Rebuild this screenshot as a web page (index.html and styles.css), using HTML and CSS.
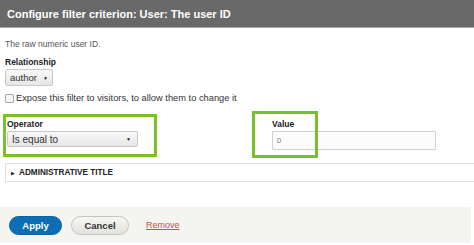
FILE: index.html
```html
<!DOCTYPE html>
<html>
<head>
<meta charset="utf-8">
<link rel="stylesheet" href="styles.css">
</head>
<body>
<div class="dialog">
  <header class="title-bar">
    <h1 class="title">Configure filter criterion: User: The user ID</h1>
  </header>
  <div class="content">
    <p class="description">The raw numeric user ID.</p>
    <div class="form-item relationship">
      <label class="label">Relationship</label>
      <div class="select small-select"><span>author</span><span class="arrow">&#9660;</span></div>
    </div>
    <div class="checkbox-row">
      <span class="checkbox"></span>
      <span class="checkbox-label">Expose this filter to visitors, to allow them to change it</span>
    </div>
    <div class="filter-row">
      <div class="form-item operator">
        <label class="label">Operator</label>
        <div class="select wide-select"><span>Is equal to</span><span class="arrow">&#9660;</span></div>
        <span class="highlight hl-operator"></span>
      </div>
      <div class="form-item value">
        <label class="label">Value</label>
        <div class="text-input">0</div>
        <span class="highlight hl-value"></span>
      </div>
    </div>
    <div class="details">
      <span class="triangle">&#9654;</span><span class="summary">ADMINISTRATIVE TITLE</span>
    </div>
  </div>
  <footer class="actions">
    <button class="btn btn-primary">Apply</button>
    <button class="btn btn-secondary">Cancel</button>
    <a class="link-remove" href="#">Remove</a>
  </footer>
</div>
</body>
</html>
```
FILE: styles.css
```css
html, body {
  margin: 0;
  padding: 0;
  background: #ffffff;
}
body {
  font-family: "Liberation Sans", Arial, sans-serif;
  color: #333;
  width: 474px;
  height: 245px;
  overflow: hidden;
}
.dialog {
  display: flex;
  flex-direction: column;
}
.title-bar {
  height: 27px;
  background: #696969;
  border-bottom: 1px solid #a9a9a9;
  display: flex;
  align-items: center;
  padding-left: 7px;
}
.title {
  margin: 0;
  font-size: 11px;
  font-weight: bold;
  color: #ffffff;
  letter-spacing: 0;
}
.content {
  padding-left: 5px;
  display: flex;
  flex-direction: column;
}
.description {
  margin: 12px 0 0 0;
  font-size: 8.5px;
  color: #555;
  line-height: 9px;
}
.form-item {
  display: flex;
  flex-direction: column;
  position: relative;
}
.label {
  font-size: 8.5px;
  font-weight: bold;
  color: #222;
  line-height: 10px;
}
.relationship {
  margin-top: 8px;
}
.select {
  display: flex;
  align-items: center;
  justify-content: space-between;
  box-sizing: border-box;
  border: 1px solid #c8c8c8;
  border-radius: 2px;
  background: linear-gradient(#f8f8f8, #e6e6e6);
  font-size: 9.5px;
  color: #333;
  padding: 0 4px 0 4px;
}
.small-select {
  margin-top: 2px;
  width: 48px;
  height: 17px;
}
.arrow {
  font-size: 5px;
  color: #222;
}
.checkbox-row {
  display: flex;
  align-items: center;
  margin-top: 7px;
  gap: 2px;
}
.checkbox {
  width: 7px;
  height: 7px;
  border: 1px solid #aaa;
  border-radius: 1px;
  background: #f4f4f4;
}
.checkbox-label {
  font-size: 9.3px;
  color: #333;
  line-height: 10px;
}
.filter-row {
  display: flex;
  margin-top: 16px;
}
.operator {
  margin-left: 2px;
  width: 131px;
}
.wide-select {
  margin-top: 2px;
  width: 131px;
  height: 16px;
  padding-right: 6px;
  font-size: 10px;
}
.value {
  margin-left: 134px;
}
.text-input {
  box-sizing: border-box;
  margin-top: 2px;
  width: 164px;
  height: 19px;
  border: 1px solid #d0d0d0;
  border-radius: 1px;
  background: #fcfcfc;
  font-size: 7.5px;
  color: #777;
  padding-left: 4px;
  display: flex;
  align-items: center;
}
.highlight {
  position: absolute;
  border: 3px solid #78c12c;
  box-sizing: border-box;
}
.hl-operator {
  left: -4px;
  top: -5px;
  width: 154px;
  height: 43px;
}
.hl-value {
  left: -20px;
  top: -8px;
  width: 66px;
  height: 47px;
}
.details {
  margin-top: 13px;
  height: 19px;
  box-sizing: border-box;
  border: 1px solid #dedede;
  border-right: none;
  display: flex;
  align-items: center;
  padding-left: 5px;
  gap: 4px;
}
.triangle {
  font-size: 5px;
  color: #222;
}
.summary {
  font-size: 8.2px;
  font-weight: bold;
  color: #222;
}
.actions {
  margin-top: 25px;
  width: 471px;
  height: 36px;
  background: #f4f4f0;
  display: flex;
  align-items: center;
  padding-left: 9px;
  box-sizing: border-box;
}
.btn {
  font-family: "Liberation Sans", Arial, sans-serif;
  font-weight: bold;
  font-size: 9.5px;
  height: 19px;
  border-radius: 10px;
  padding: 0;
  cursor: pointer;
}
.btn-primary {
  width: 53px;
  background: #0c6fb6;
  border: 1px solid #0a62a3;
  color: #ffffff;
}
.btn-secondary {
  margin-left: 9px;
  width: 58px;
  background: linear-gradient(#f6f6f4, #e2e2de);
  border: 1px solid #c4c4bf;
  color: #333;
}
.link-remove {
  margin-left: 17px;
  font-size: 9px;
  color: #c8503d;
  text-decoration: underline;
}
```
